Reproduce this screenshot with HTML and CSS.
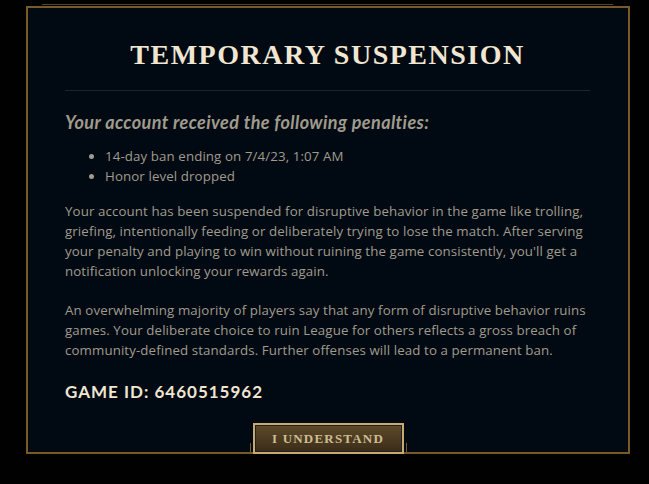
FILE: index.html
```html
<!DOCTYPE html>
<html lang="en">
<head>
    <meta charset="UTF-8">
    <meta name="viewport" content="width=device-width, initial-scale=1.0">
    <title>Temporary Suspension</title>
    <link rel="stylesheet" href="styles.css">
</head>
<body>
    <div class="modal">
        <div class="modal-body">
            <h1 class="title">TEMPORARY SUSPENSION</h1>
            <hr class="divider">
            <h2 class="subtitle">Your account received the following penalties:</h2>
            <ul class="penalties">
                <li>14-day ban ending on 7/4/23, 1:07 AM</li>
                <li>Honor level dropped</li>
            </ul>
            <p class="text">Your account has been suspended for disruptive behavior in the game like trolling, griefing, intentionally feeding or deliberately trying to lose the match. After serving your penalty and playing to win without ruining the game consistently, you'll get a notification unlocking your rewards again.</p>
            <p class="text">An overwhelming majority of players say that any form of disruptive behavior ruins games. Your deliberate choice to ruin League for others reflects a gross breach of community-defined standards. Further offenses will lead to a permanent ban.</p>
            <div class="game-id">GAME ID: 6460515962</div>
        </div>
        <div class="modal-footer">
            <div class="btn-wrap">
                <button class="btn">I UNDERSTAND</button>
            </div>
        </div>
    </div>
</body>
</html>
```

FILE: styles.css
```css
/* Estilo geral */
body {
    background-color: #010101;
    margin: 0;
    padding: 6px 19px 0 26px;
    font-family: "Open Sans", sans-serif;
}

.modal {
    position: relative;
    width: 600px;
    height: 444px;
    border: 2px solid #785a28;
    background-color: #010a13;
    display: flex;
    flex-direction: column;
}

/* linha dourada de fora, em cima e embaixo */
.modal::before,
.modal::after {
    content: "";
    position: absolute;
    left: 14px;
    right: 15px;
    height: 1px;
    background-color: #5b4520;
}

.modal::before {
    top: -4px;
}

.modal::after {
    bottom: -5px;
}

.modal-body {
    flex: 1;
    padding: 29px 38px 0 37px;
}

.title {
    margin: 0;
    font-family: "Liberation Serif", serif;
    font-weight: bold;
    font-size: 28px;
    line-height: 36px;
    letter-spacing: 1.5px;
    text-align: center;
    color: #f0e6d2;
}

.divider {
    border: 0;
    border-top: 1px solid #1e2328;
    margin: 17px 0 0 0;
}

.subtitle {
    margin: 19px 0 0 0;
    font-family: "Lato", sans-serif;
    font-style: italic;
    font-weight: bold;
    font-size: 18px;
    line-height: 24px;
    letter-spacing: 0.4px;
    color: #a09b8c;
}

.penalties {
    margin: 12px 0 0 0;
    padding-left: 40px;
    font-size: 13.3px;
    line-height: 20px;
    letter-spacing: 0.1px;
    color: #a09b8c;
}

.text {
    margin: 15px 0 0 0;
    font-size: 13.3px;
    line-height: 20px;
    letter-spacing: 0.1px;
    color: #a09b8c;
}

.text + .text {
    margin-top: 19px;
}

.game-id {
    margin-top: 20px;
    font-family: "Lato", sans-serif;
    font-weight: bold;
    font-size: 17px;
    line-height: 24px;
    letter-spacing: 1px;
    color: #f0e6d2;
}

.modal-footer {
    display: flex;
    justify-content: center;
    margin-bottom: -2px;
}

.btn-wrap {
    position: relative;
    padding: 0 3px;
}

/* pequenos traços dos lados do botão */
.btn-wrap::before,
.btn-wrap::after {
    content: "";
    position: absolute;
    bottom: 0;
    width: 1px;
    height: 11px;
    background-color: #785a28;
}

.btn-wrap::before {
    left: 0;
}

.btn-wrap::after {
    right: 0;
}

.btn {
    display: block;
    width: 151px;
    height: 31px;
    border: 2px solid #c8aa6e;
    box-shadow: inset 0 0 0 1px #1e2328;
    background: linear-gradient(#5e4a2a, #3a2c19);
    font-family: "Liberation Serif", serif;
    font-weight: bold;
    font-size: 13px;
    letter-spacing: 1.2px;
    color: #cdbe91;
    padding: 0;
}
```
